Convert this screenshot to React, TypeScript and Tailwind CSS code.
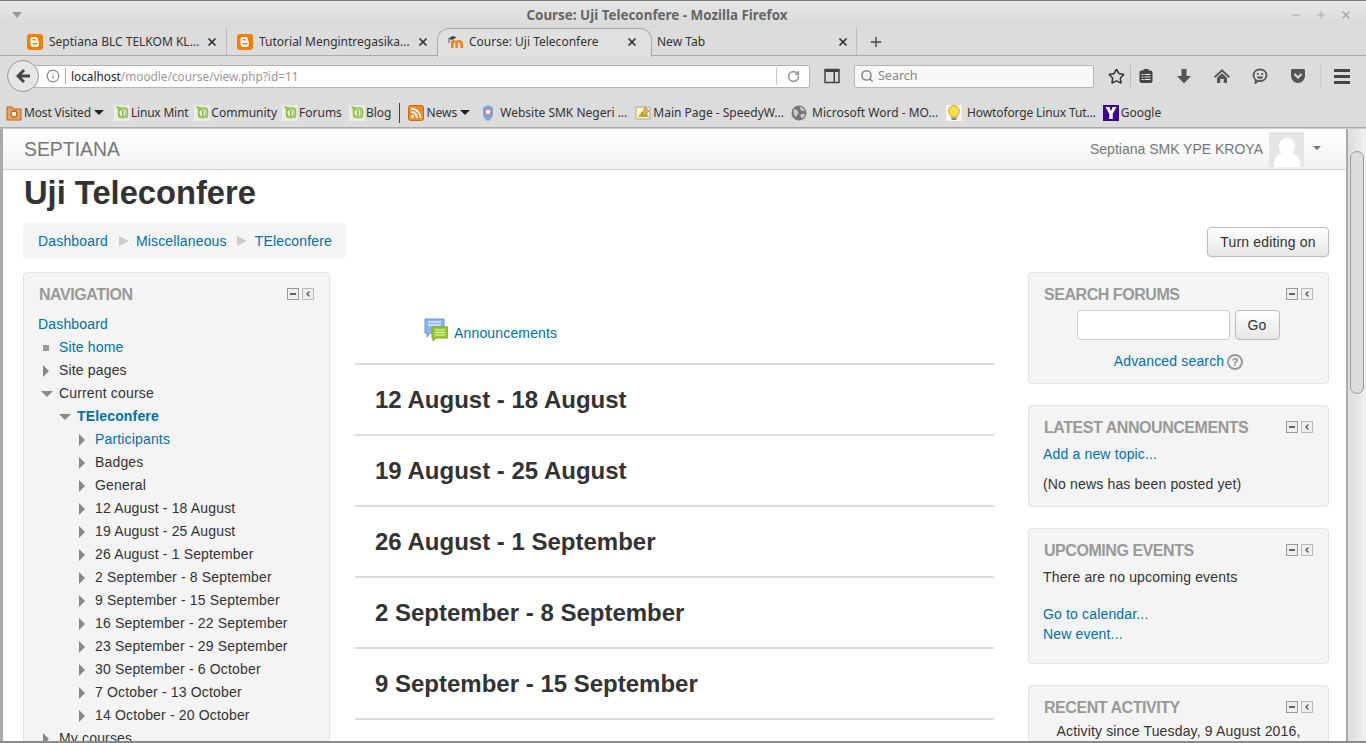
import { ChevronLeft, Info, Minus, Plus, RotateCw, Search, Star, X } from "lucide-react";

// favicon drawings
function Blogger({ className = "" }: { className?: string }) {
  return (
    <svg viewBox="0 0 16 16" className={"w-4 h-4 shrink-0 " + className}>
      <rect width="16" height="16" rx="3" fill="#f57d00" />
      <path d="M5.500 3h3a2.500 2.500 0 0 1 2.500 2.500V7h.5a.5.5 0 0 1 .5.5V10a3 3 0 0 1-3 3H6.500A3 3 0 0 1 3.500 10V5a2 2 0 0 1 2-2z" fill="#fff" />
      <rect x="5.500" y="5" width="3.500" height="1.500" rx=".7" fill="#f57d00" />
      <rect x="5.500" y="9" width="5" height="1.500" rx=".7" fill="#f57d00" />
    </svg>
  );
}

function MoodleHat() {
  return (
    <svg viewBox="0 0 16 16" className="w-4 h-4 shrink-0">
      <path d="M0 4.500L5 2l3.500 1.500L4 6z" fill="#444" />
      <path d="M1 5v4" stroke="#555" />
      <path d="M3 14V8.500C3 7 4 6 5.500 6c1 0 1.800.4 2.300 1.200C8.400 6.400 9.300 6 10.500 6 13 6 15 7 15 9.500V14h-2.700V9.800c0-1-.4-1.400-1.200-1.400s-1.300.4-1.300 1.400V14H7.500V9.800c0-1-.3-1.400-1-1.400s-1 .4-1 1.400V14z" fill="#f98012" />
    </svg>
  );
}

function MintIcon() {
  return (
    <svg viewBox="0 0 16 16" className="w-4 h-4 shrink-0">
      <rect width="16" height="16" fill="#ececec" />
      <path d="M2 2h3v7.500A1.500 1.500 0 0 0 6.500 11h4A1.500 1.500 0 0 0 12 9.500V6a1.500 1.500 0 0 0-3 0v4M8.500 10V6a1.500 1.500 0 0 0-3 0" fill="none" stroke="#7cb82f" strokeWidth="1" />
      <path d="M3 2.500h1.500V10A2.500 2.500 0 0 0 7 12.500h4A2.500 2.500 0 0 0 13.500 10V6a3 3 0 0 0-3-3H6v1.500" fill="none" stroke="#8fc63c" strokeWidth="1.500" />
    </svg>
  );
}

function Triangle() {
  return <span className="ml-[3px] w-0 h-0 border-x-[5px] border-x-transparent border-t-[5px] border-t-[#222]" />;
}

function BlockIcons() {
  return (
    <div className="flex gap-[3px] pt-[3px]">
      <span className="w-3 h-3 border border-[#999] bg-[#eee] flex items-center justify-center">
        <span className="w-[6px] h-[2px] bg-[#666]" />
      </span>
      <span className="w-3 h-3 border border-[#bbb] bg-[#eee] flex items-center justify-center">
        <ChevronLeft className="w-2 h-2 text-[#555]" strokeWidth={4} />
      </span>
    </div>
  );
}

function Block({ title, className, children }: { title: string; className: string; children: React.ReactNode }) {
  return (
    <section className={"border border-[#e3e3e3] bg-[#f4f4f4] rounded-[4px] " + className}>
      <div className="flex justify-between pl-[15px] pr-[15px] pt-[12px]">
        <h2 className="text-[16px] leading-[20px] font-bold text-[#999] tracking-[-0.45px]">{title}</h2>
        <BlockIcons />
      </div>
      {children}
    </section>
  );
}

type NavItem = { label: string; depth: number; icon: "square" | "right" | "down" | "none"; link?: boolean; bold?: boolean };

const navItems: NavItem[] = [
  { label: "Dashboard", depth: 0, icon: "none", link: true },
  { label: "Site home", depth: 0, icon: "square", link: true },
  { label: "Site pages", depth: 0, icon: "right" },
  { label: "Current course", depth: 0, icon: "down" },
  { label: "TEleconfere", depth: 1, icon: "down", link: true, bold: true },
  { label: "Participants", depth: 2, icon: "right", link: true },
  { label: "Badges", depth: 2, icon: "right" },
  { label: "General", depth: 2, icon: "right" },
  { label: "12 August - 18 August", depth: 2, icon: "right" },
  { label: "19 August - 25 August", depth: 2, icon: "right" },
  { label: "26 August - 1 September", depth: 2, icon: "right" },
  { label: "2 September - 8 September", depth: 2, icon: "right" },
  { label: "9 September - 15 September", depth: 2, icon: "right" },
  { label: "16 September - 22 September", depth: 2, icon: "right" },
  { label: "23 September - 29 September", depth: 2, icon: "right" },
  { label: "30 September - 6 October", depth: 2, icon: "right" },
  { label: "7 October - 13 October", depth: 2, icon: "right" },
  { label: "14 October - 20 October", depth: 2, icon: "right" },
  { label: "My courses", depth: 0, icon: "right" },
];

const indent: Record<number, string> = { 0: "pl-[5px]", 1: "pl-[23px]", 2: "pl-[41px]" };

function NavRow({ item }: { item: NavItem }) {
  return (
    <li className={"flex items-center h-[23px] " + indent[item.depth]}>
      {item.icon === "none" ? null : (
        <span className="w-[18px] shrink-0 flex items-center">
          {item.icon === "square" && <span className="ml-[2px] w-[6px] h-[6px] bg-[#999]" />}
          {item.icon === "right" && <span className="ml-[2px] w-0 h-0 border-y-[6px] border-y-transparent border-l-[6px] border-l-[#888]" />}
          {item.icon === "down" && <span className="w-0 h-0 border-x-[6px] border-x-transparent border-t-[6px] border-t-[#888]" />}
        </span>
      )}
      <span className={(item.link ? "text-[#0070a8] " : "text-[#333] ") + (item.bold ? "font-bold" : "") + (item.icon === "none" ? " -ml-[3px]" : "")}>
        {item.label}
      </span>
    </li>
  );
}

const sections = [
  "12 August - 18 August",
  "19 August - 25 August",
  "26 August - 1 September",
  "2 September - 8 September",
  "9 September - 15 September",
];

export default function App() {
  return (
    <div className="w-[1366px] h-[743px] overflow-hidden flex flex-col bg-[#dcdcdc] border-b-[2px] border-b-[#8a8a8a] text-[12px] text-[#333] font-['Noto_Sans',sans-serif]">
      {/* title bar */}
      <div className="h-[28px] shrink-0 border-t border-[#777] bg-gradient-to-b from-[#e6e6e6] to-[#d9d9d9] flex items-center pl-[12px] pr-[14px] pt-[1px]">
        <span className="w-0 h-0 border-x-[5px] border-x-transparent border-t-[6px] border-t-[#999]" />
        <div className="flex-1 pl-[2px] text-center font-bold text-[#666] text-[13.400px]">Course: Uji Teleconfere - Mozilla Firefox</div>
        <div className="flex items-center gap-[13px] text-[#aaa]">
          <Minus className="w-3 h-3" strokeWidth={2} />
          <Plus className="w-3 h-3" strokeWidth={2} />
          <X className="w-3 h-3" strokeWidth={3} />
        </div>
      </div>

      {/* tabs */}
      <div className="h-[28px] shrink-0 flex items-center pl-[17px] border-b border-[#aaa] text-[#333]">
        <div className="w-[210px] h-full pt-[1px] flex items-center pl-[10px] pr-[8px] border-r border-[#bbb]">
          <Blogger />
          <span className="ml-[6px] flex-1 whitespace-nowrap">Septiana BLC TELKOM KL...</span>
          <X className="w-3 h-3 text-[#333]" strokeWidth={3.500} />
        </div>
        <div className="w-[210px] h-full pt-[1px] flex items-center pl-[10px] pr-[8px]">
          <Blogger />
          <span className="ml-[6px] flex-1 whitespace-nowrap">Tutorial Mengintregasika...</span>
          <X className="w-3 h-3 text-[#333]" strokeWidth={3.500} />
        </div>
        <div className="w-[215px] h-[29px] -mb-[1px] pb-[1px] flex items-center pl-[10px] pr-[13px] bg-[#e0e0e0] border border-b-0 border-[#aaa] rounded-t-[12px]">
          <MoodleHat />
          <span className="ml-[5px] flex-1 whitespace-nowrap">Course: Uji Teleconfere</span>
          <X className="w-3 h-3 text-[#333]" strokeWidth={3.500} />
        </div>
        <div className="w-[205px] h-full pt-[1px] flex items-center pl-[5px] pr-[7px] border-r border-[#bbb]">
          <span className="flex-1">New Tab</span>
          <X className="w-3 h-3 text-[#333]" strokeWidth={3.500} />
        </div>
        <Plus className="ml-[11px] w-[16px] h-[16px] text-[#444]" strokeWidth={2} />
      </div>

      {/* nav toolbar */}
      <div className="h-[38px] shrink-0 pt-[2px] flex items-center relative pl-[31px] pr-[12px]">
        <div className="h-[23px] w-[779px] border border-[#b5b5b5] rounded-r-[2px] bg-white flex items-center pl-[14px] text-[#999] text-[11.800px]">
          <Info className="w-[14px] h-[14px] text-[#888]" />
          <span className="ml-[5px] h-[16px] border-l border-[#aaa] pl-[5px] leading-[16px]">
            <span className="text-[#222]">localhost</span>/moodle/course/view.php?id=11
          </span>
          <span className="ml-auto h-[18px] border-l border-[#ccc] w-[33px] flex items-center justify-center">
            <RotateCw className="w-[13px] h-[13px] text-[#999]" strokeWidth={3} />
          </span>
        </div>
        {/* back button sits over the left end of the url bar */}
        <div className="absolute left-[7px] top-[4px] w-[32px] h-[32px] rounded-full border border-[#999] bg-[#e6e6e6] flex items-center justify-center">
          <svg viewBox="0 0 16 16" className="w-4 h-4 text-[#444]">
            <path d="M8 1L1 8l7 7 2-2-3.500-3.500H15v-3H6.500L10 3z" fill="currentColor" />
          </svg>
        </div>
        <svg viewBox="0 0 16 16" className="ml-[14px] w-4 h-4 text-[#444]">
          <path d="M1 1.500h14v13H1z" fill="none" stroke="currentColor" strokeWidth="1.500" />
          <path d="M1 1.500h14v2.500H1zM9.500 4h1.500v10H9.500z" fill="currentColor" />
        </svg>
        <div className="ml-[14px] w-[240px] h-[23px] border border-[#b5b5b5] rounded-[2px] bg-[#f8f8f8] flex items-center pl-[5px] text-[#888] text-[12.500px]">
          <Search className="w-[14px] h-[14px] text-[#888]" strokeWidth={2.500} />
          <span className="ml-[4px]">Search</span>
        </div>
        <Star className="ml-[14px] w-[17px] h-[17px] text-[#333]" strokeWidth={2.200} />
        <span className="ml-[5px] h-[22px] border-l border-[#bbb]" />
        <svg viewBox="0 0 16 16" className="ml-[7px] w-4 h-4 text-[#444]">
          <rect x="1.500" y="2.500" width="13" height="12.500" rx="2" fill="currentColor" />
          <path d="M5.500 1h5v2.500h-5z" fill="currentColor" />
          <path d="M3.500 6.500h9M3.500 9h9M3.500 11.500h9" stroke="#eee" strokeWidth="1.100" />
          <path d="M6 5.500v7.500" stroke="#444" />
        </svg>
        <svg viewBox="0 0 16 16" className="ml-[22px] w-4 h-4 text-[#555]">
          <path d="M5.500 1h5v7H15l-7 7.500L1 8h4.500z" fill="currentColor" />
        </svg>
        <svg viewBox="0 0 16 16" className="ml-[22px] w-4 h-4 text-[#555]">
          <path d="M8 1L0 8.500 1.200 10 8 3.700 14.800 10 16 8.500z" fill="currentColor" />
          <path d="M3 9.800L8 5.300l5 4.500V15H9.700v-4H6.300v4H3z" fill="currentColor" />
        </svg>
        <svg viewBox="0 0 16 16" className="ml-[22px] w-4 h-4 text-[#555]">
          <path d="M8 1.500c3.800 0 6.500 2.500 6.500 5.800S11.800 13 8 13c-.7 0-1.300-.1-2-.2L3.500 15l.3-3C2.300 11 1.500 9.300 1.500 7.300 1.500 4 4.200 1.500 8 1.500z" fill="none" stroke="currentColor" strokeWidth="1.800" />
          <circle cx="5.800" cy="6" r="1.100" fill="currentColor" />
          <circle cx="10.200" cy="6" r="1.100" fill="currentColor" />
          <path d="M4.800 8.500h6.400C10.700 10.200 9.500 11 8 11s-2.700-.8-3.200-2.500z" fill="currentColor" />
        </svg>
        <svg viewBox="0 0 16 16" className="ml-[22px] w-4 h-4 text-[#555]">
          <path d="M1 2.500C1 1.700 1.700 1 2.500 1h11c.8 0 1.500.7 1.500 1.500V7c0 4.500-3 8-7 8s-7-3.500-7-8z" fill="currentColor" />
          <path d="M4.500 6L8 9.500 11.500 6" fill="none" stroke="#dcdcdc" strokeWidth="2" />
        </svg>
        <span className="ml-[14px] h-[26px] border-l border-[#ccc]" />
        <div className="ml-[13px] flex flex-col gap-[3px]">
          <span className="w-4 h-[3px] bg-[#444]" />
          <span className="w-4 h-[3px] bg-[#444]" />
          <span className="w-4 h-[3px] bg-[#444]" />
        </div>
      </div>

      {/* bookmarks */}
      <div className="h-[34px] shrink-0 pt-[4px] border-b border-[#aaa] flex items-center pl-[6px] text-[12px] text-[#333] whitespace-nowrap">
        <svg viewBox="0 0 16 16" className="w-4 h-4 shrink-0">
          <path d="M1 2h5l1.500 2H15v11H1z" fill="#e8a55a" stroke="#b8641c" />
          <circle cx="8" cy="9" r="3" fill="#fff" stroke="#b8641c" strokeWidth="1.300" />
        </svg>
        <span className="ml-[2px] tracking-[-0.17px]">Most Visited</span>
        <Triangle />
        <span className="ml-[10px]"><MintIcon /></span>
        <span className="ml-[1px] tracking-[-0.2px]">Linux Mint</span>
        <span className="ml-[6px]"><MintIcon /></span>
        <span className="ml-[1px]">Community</span>
        <span className="ml-[5px]"><MintIcon /></span>
        <span className="ml-[1px]">Forums</span>
        <span className="ml-[7px]"><MintIcon /></span>
        <span className="ml-[1px]">Blog</span>
        <span className="ml-[8px] h-[20px] border-l border-[#444]" />
        <svg viewBox="0 0 16 16" className="ml-[8px] w-4 h-4 shrink-0">
          <rect x=".5" y=".5" width="15" height="15" rx="2" fill="#f08a24" stroke="#c96a10" />
          <circle cx="4.500" cy="11.500" r="1.700" fill="#fff" />
          <path d="M3 7a6 6 0 0 1 6 6M3 3.500a9.500 9.500 0 0 1 9.500 9.500" fill="none" stroke="#fff" strokeWidth="1.800" />
        </svg>
        <span className="ml-[2px]">News</span>
        <Triangle />
        <svg viewBox="0 0 16 16" className="ml-[10px] w-4 h-4 shrink-0">
          <path d="M8 0l5 2.500v7c0 3-2.500 5-5 6.500-2.500-1.500-5-3.500-5-6.500v-7z" fill="#7fa2e0" />
          <circle cx="8" cy="7" r="3" fill="#fff" stroke="#c66" />
        </svg>
        <span className="ml-[4px]">Website SMK Negeri ...</span>
        <svg viewBox="0 0 16 16" className="ml-[8px] w-4 h-4 shrink-0">
          <path d="M1 2h14v12H1z" fill="#fdf3c4" stroke="#aa9" />
          <path d="M3 12l4-6 2 3 2-2 3 5z" fill="#b9b23a" />
          <path d="M10 2l4 4-5 5-2-1z" fill="#e8b04a" stroke="#666" strokeWidth=".5" />
        </svg>
        <span className="ml-[2px]">Main Page - SpeedyW...</span>
        <svg viewBox="0 0 16 16" className="ml-[7px] w-4 h-4 shrink-0">
          <circle cx="8" cy="8" r="7.500" fill="#777" />
          <path d="M3 4c2 0 3 1 4 3s-1 3-2 5C3 11 2 7 3 4zM9 2c2 0 4 2 5 4-2 0-3 0-4-1s-1-2-1-3zM10 9h4c0 2-2 4-3 4s-2-3-1-4z" fill="#ccc" />
        </svg>
        <span className="ml-[5px]">Microsoft Word - MO...</span>
        <svg viewBox="0 0 16 16" className="ml-[8px] w-4 h-4 shrink-0">
          <rect width="16" height="16" fill="#f4f4f4" />
          <path d="M8 0.500a5.500 5.500 0 0 1 3 10V12H5v-1.500A5.500 5.500 0 0 1 8 .500z" fill="#f8de4a" stroke="#d4a820" />
          <path d="M5.500 12.500h5v2.500h-5z" fill="#888" />
        </svg>
        <span className="ml-[5px] tracking-[-0.13px]">Howtoforge Linux Tut...</span>
        <svg viewBox="0 0 16 16" className="ml-[7px] w-4 h-4 shrink-0">
          <rect width="16" height="16" fill="#400090" />
          <path d="M2.500 2h4l1.500 4.500L9.500 2h4L9.700 9v5H6.300V9z" fill="#fff" />
        </svg>
        <span className="ml-[2px]">Google</span>
      </div>

      {/* page viewport */}
      <div className="h-[613px] shrink-0 flex border-l-[3px] border-l-[#aaa] border-t border-t-[#ccc] bg-white font-['Liberation_Sans',sans-serif] text-[14px] tracking-[0.16px]">
        <div className="w-[1343px] shrink-0 overflow-hidden">
          <header className="h-[41px] bg-gradient-to-b from-white to-[#f2f2f2] border-b border-[#d5d5d5] shadow-[0_1px_8px_rgba(0,0,0,0.06)] flex items-center pl-[21px] pr-[25px] text-[#777] tracking-normal">
            <span className="mt-[1px] text-[19.400px]">SEPTIANA</span>
            <span className="ml-auto">Septiana SMK YPE KROYA</span>
            <span className="ml-[6px] w-[35px] h-[35px] bg-[#e5e5e5] overflow-hidden flex flex-col items-center">
              <span className="mt-[6px] w-[16px] h-[19px] rounded-full bg-white" />
              <span className="-mt-[3px] w-[26px] h-[16px] rounded-t-[12px] bg-white" />
            </span>
            <span className="ml-[9px] -mt-[3px] w-0 h-0 border-x-[4px] border-x-transparent border-t-[4px] border-t-[#777]" />
          </header>

          <div className="pl-[20px] pr-[17px]">
            <h1 className="mt-[5px] ml-[1px] text-[32.700px] leading-[36px] font-bold text-[#333] tracking-normal">Uji Teleconfere</h1>
            <div className="mt-[12px] flex justify-between items-start">
              <nav className="h-[36px] w-[323px] rounded-[4px] bg-[#f5f5f5] flex items-center pl-[15px] text-[#0070a8]">
                <span>Dashboard</span>
                <span className="ml-[11px] mr-[7px] w-0 h-0 border-y-[5px] border-y-transparent border-l-[10px] border-l-[#ccc]" />
                <span>Miscellaneous</span>
                <span className="ml-[10px] mr-[8px] w-0 h-0 border-y-[5px] border-y-transparent border-l-[10px] border-l-[#ccc]" />
                <span>TEleconfere</span>
              </nav>
              <button className="mt-[4px] h-[30px] w-[122px] rounded-[4px] border border-[#bbb] bg-gradient-to-b from-white to-[#e6e6e6] shadow-[0_1px_2px_rgba(0,0,0,0.05)] text-[#333]">
                Turn editing on
              </button>
            </div>

            <div className="mt-[13px] flex items-start">
              {/* navigation block */}
              <Block title="NAVIGATION" className="w-[307px] shrink-0">
                <ul className="pl-[12px] pt-[8px]">
                  {navItems.map((item) => (
                    <NavRow key={item.label} item={item} />
                  ))}
                </ul>
              </Block>

              {/* center column */}
              <main className="w-[639px] shrink-0 ml-[25px]">
                <div className="pt-[54px] pl-[69px] h-[93px] flex items-start border-b-[2px] border-[#ddd]">
                  <svg viewBox="0 0 24 24" className="w-6 h-6 shrink-0 -mt-[8px]">
                    <path d="M1 1h19v14H6l-3 4v-4H1z" fill="#8cb4f0" stroke="#6a90d8" />
                    <path d="M4 4h13M4 7h13" stroke="#fff" />
                    <path d="M8 9h16v11H12l-3 3v-3H8z" fill="#9ccb2c" stroke="#7ea81e" />
                    <path d="M11 12h10M11 14.500h10M11 17h10" stroke="#eef7d0" />
                  </svg>
                  <span className="ml-[6px] text-[#0070a8] leading-[16px] -mt-[1px]">Announcements</span>
                </div>
                {sections.map((label) => (
                  <div key={label} className="h-[71px] pt-[1px] border-b-[2px] border-[#ddd] flex items-center pl-[20px] text-[24px] font-bold text-[#333] tracking-normal">
                    {label}
                  </div>
                ))}
              </main>

              {/* right column */}
              <aside className="w-[301px] shrink-0 ml-[34px] flex flex-col gap-[21px]">
                <Block title="SEARCH FORUMS" className="h-[112px]">
                  <div className="mt-[5px] flex justify-center pr-[1px] gap-[5px]">
                    <span className="w-[153px] h-[30px] rounded-[4px] border border-[#ccc] bg-white" />
                    <button className="w-[45px] h-[30px] rounded-[4px] border border-[#bbb] bg-gradient-to-b from-white to-[#e6e6e6] text-[#333]">Go</button>
                  </div>
                  <div className="mt-[11px] flex justify-center items-center text-[#0070a8]">
                    Advanced search
                    <span className="ml-[3px] w-[16px] h-[16px] rounded-full border-[2px] border-[#999] text-[#888] text-[11px] font-bold leading-[12px] text-center">?</span>
                  </div>
                </Block>
                <Block title="LATEST ANNOUNCEMENTS" className="h-[102px]">
                  <div className="pl-[14px] pt-[6px] leading-[20px]">
                    <div className="text-[#0070a8]">Add a new topic...</div>
                    <div className="mt-[10px]">(No news has been posted yet)</div>
                  </div>
                </Block>
                <Block title="UPCOMING EVENTS" className="h-[136px]">
                  <div className="pl-[14px] pt-[6px] leading-[20px]">
                    <div>There are no upcoming events</div>
                    <div className="mt-[17px] text-[#0070a8]">Go to calendar...</div>
                    <div className="text-[#0070a8]">New event...</div>
                  </div>
                </Block>
                <Block title="RECENT ACTIVITY" className="h-[120px]">
                  <div className="pt-[3px] text-center leading-[20px]">Activity since Tuesday, 9 August 2016,</div>
                </Block>
              </aside>
            </div>
          </div>
        </div>

        {/* scrollbar */}
        <div className="w-[20px] shrink-0 border-l-[2px] border-[#aaa] bg-gradient-to-r from-[#ddd] to-[#f0f0f0] pt-[22px] px-[2px]">
          <div className="h-[243px] rounded-full border border-[#999] bg-[#ddd]" />
        </div>
      </div>
    </div>
  );
}
